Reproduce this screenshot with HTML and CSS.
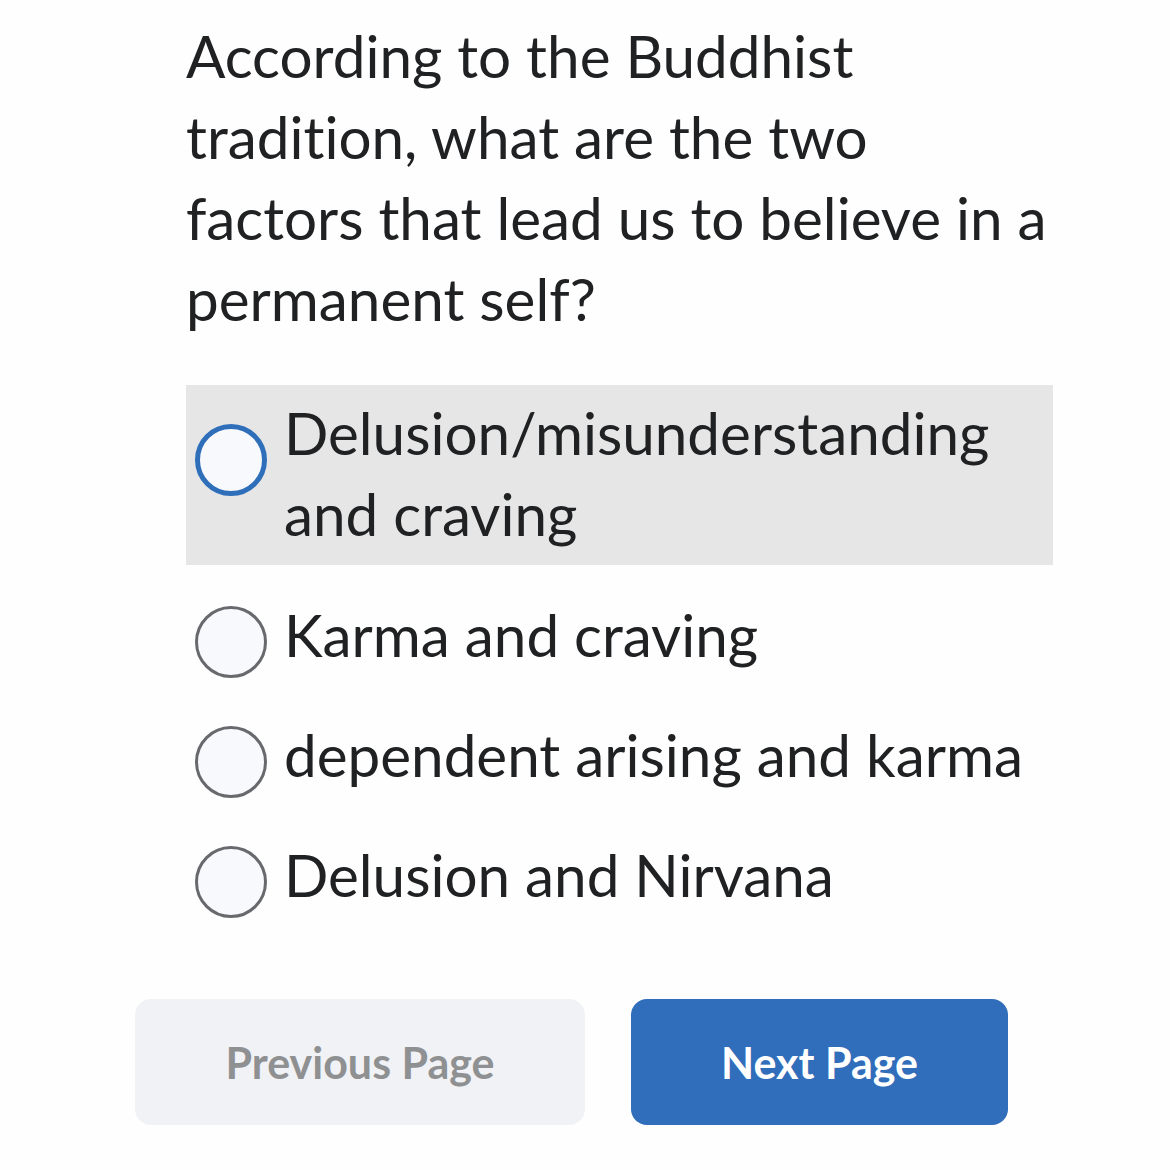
FILE: index.html
```html
<!DOCTYPE html>
<html lang="en">
<head>
<meta charset="UTF-8" />
<meta name="viewport" content="width=device-width, initial-scale=1.0"/>
<title>Quiz Question</title>
<link rel="stylesheet" href="styles.css">
</head>
<body>

<main class="quiz">
  <p class="question">According to the Buddhist tradition, what are the two factors that lead us to believe in a permanent self?</p>

  <ul class="choices">
    <li class="choice is-selected">
      <span class="radio"></span>
      <span class="choice-label">Delusion/misunderstanding and craving</span>
    </li>
    <li class="choice">
      <span class="radio"></span>
      <span class="choice-label">Karma and craving</span>
    </li>
    <li class="choice">
      <span class="radio"></span>
      <span class="choice-label">dependent arising and karma</span>
    </li>
    <li class="choice">
      <span class="radio"></span>
      <span class="choice-label">Delusion and Nirvana</span>
    </li>
  </ul>

  <div class="pager">
    <button class="btn btn-prev">Previous Page</button>
    <button class="btn btn-next">Next Page</button>
  </div>
</main>

</body>
</html>
```

FILE: styles.css
```css
body {
  margin: 0;
  background: #fefefe;
  color: #202122;
  font-family: Lato, "Open Sans", sans-serif;
  font-variant-ligatures: none;
}

.quiz {
  padding: 15px 0 0 135px;
}

.question {
  margin: 0 0 0 51px;
  width: 866px;
  font-size: 58.4px;
  line-height: 81px;
}

.choices {
  list-style: none;
  margin: 46px 0 0 51px;
  padding: 0;
  width: 867px;
  display: flex;
  flex-direction: column;
  gap: 22px;
}

.choice {
  display: flex;
  align-items: flex-start;
  padding: 7px 0 10px;
  font-size: 58.4px;
  line-height: 81px;
}

.choice.is-selected {
  padding-bottom: 11px;
  background: #e6e6e6;
}

.radio {
  flex: none;
  box-sizing: border-box;
  width: 72px;
  height: 72px;
  margin: 12px 17px -10px 9px;
  border: 3px solid #67696c;
  border-radius: 50%;
  background: #f8f9fd;
}

.choice.is-selected .radio {
  margin-top: 32px;
  border: 5px solid #2f6fba;
}

.pager {
  display: flex;
  gap: 46px;
  margin-top: 74px;
}

.btn {
  height: 126px;
  border: none;
  border-radius: 16px;
  font-family: Lato, sans-serif;
  font-weight: bold;
  font-size: 43px;
  cursor: pointer;
}

.btn-prev {
  width: 450px;
  background: #f1f2f6;
  color: #8f9091;
}

.btn-next {
  width: 377px;
  background: #306dba;
  color: #fff;
}
```
